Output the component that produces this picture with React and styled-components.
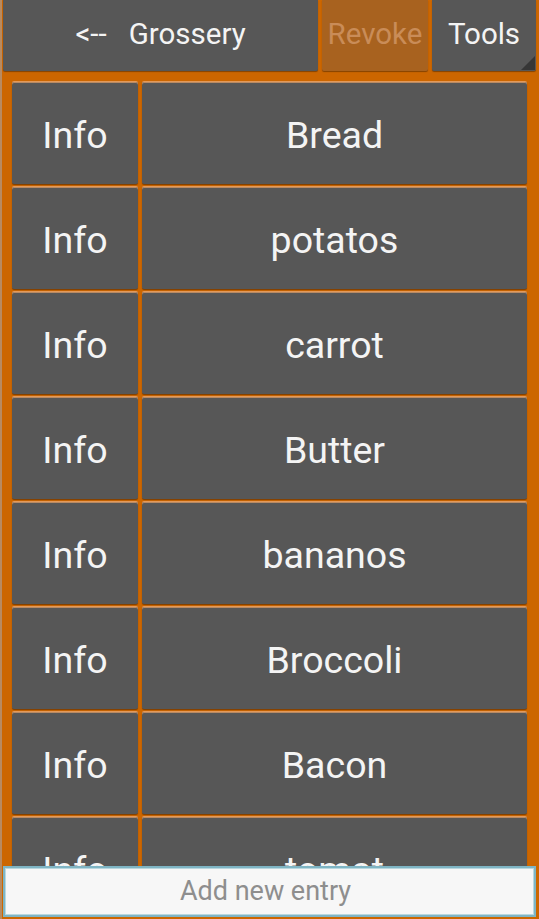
import React from "react";
import styled, { createGlobalStyle } from "styled-components";

const Global = createGlobalStyle`
  html, body { margin: 0; padding: 0; background: #cc6600; }
  * { box-sizing: border-box; }
`;

const Screen = styled.div`
  width: 539px;
  height: 919px;
  background: #cc6600;
  display: flex;
  flex-direction: column;
  overflow: hidden;
  font-family: Roboto, "Noto Sans", sans-serif;
  box-shadow: inset 2px 0 0 #b88a60;
`;

const TopBar = styled.div`
  display: grid;
  grid-template-columns: 315px 106px 1fr;
  column-gap: 4px;
  padding: 0 3px;
  height: 71px;
  flex: none;
`;

const BarButton = styled.button`
  position: relative;
  border: none;
  margin: 0;
  padding: 0;
  border-radius: 0 0 2px 2px;
  background: ${(p) => (p.$disabled ? "#a8621f" : "#575757")};
  color: ${(p) => (p.$disabled ? "#c98c58" : "#f4f4f4")};
  font-family: Roboto, "Noto Sans", sans-serif;
  font-size: 29.5px;
  line-height: 1;
  padding-bottom: 2px;
  box-shadow: 0 1px 1px rgba(0, 0, 0, 0.35);
  display: flex;
  align-items: center;
  justify-content: center;
`;

const Arrow = styled.span`
  margin-right: 22px;
`;

const Corner = styled.span`
  position: absolute;
  right: 1px;
  bottom: 1px;
  width: 0;
  height: 0;
  border-left: 14px solid transparent;
  border-bottom: 14px solid #363636;
`;

const ListArea = styled.div`
  flex: 1;
  min-height: 0;
  overflow: hidden;
  padding: 11px 12px 0 12px;
  display: flex;
  flex-direction: column;
  gap: 3px;
`;

const Row = styled.div`
  display: grid;
  grid-template-columns: 126px 1fr;
  column-gap: 4px;
  height: 102px;
  flex: none;
`;

const Cell = styled.div`
  background: #575757;
  color: #f4f4f4;
  font-size: 37.5px;
  display: flex;
  align-items: center;
  justify-content: center;
  border-radius: 2px;
  box-shadow: inset 0 1px 0 #b98a63, 0 -1px 0 #e39a5a, 0 1px 1px rgba(60, 30, 0, 0.55);
  padding-top: 3px;
`;

const EntryInput = styled.input`
  flex: none;
  height: 51px;
  margin: 0 3px 2px 3px;
  border: 2px solid #7fb5c4;
  outline: 1px solid #b9d8e0;
  outline-offset: -3px;
  background: #f7f7f7;
  font-family: Roboto, "Noto Sans", sans-serif;
  font-size: 27px;
  text-align: center;
  color: #333;
  padding: 0 8px 2px 0;
  &::placeholder { color: #8e8e8e; }
`;

const items = ["Bread", "potatos", "carrot", "Butter", "bananos", "Broccoli", "Bacon", "tomat"];

export default function App() {
  return (
    <>
      <Global />
      <Screen>
        <TopBar>
          <BarButton>
            <Arrow>&lt;--</Arrow>Grossery
          </BarButton>
          <BarButton $disabled>Revoke</BarButton>
          <BarButton>
            Tools
            <Corner />
          </BarButton>
        </TopBar>
        <ListArea>
          {items.map((name) => (
            <Row key={name}>
              <Cell>Info</Cell>
              <Cell>{name}</Cell>
            </Row>
          ))}
        </ListArea>
        <EntryInput placeholder="Add new entry" />
      </Screen>
    </>
  );
}
